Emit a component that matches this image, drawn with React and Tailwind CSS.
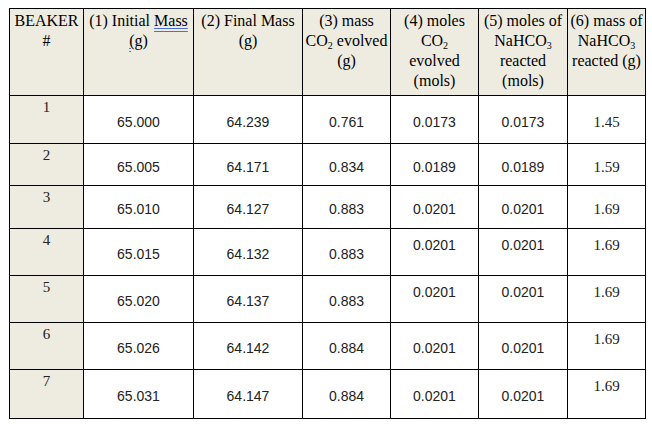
import React from "react";

const serif = { fontFamily: '"Liberation Serif", "Times New Roman", serif' };

const rows = [
  { n: "1", h: 48, v: ["65.000", "64.239", "0.761", "0.0173", "0.0173", "1.45"], top: [0, 0, 0, 0, 0, 0] },
  { n: "2", h: 42, v: ["65.005", "64.171", "0.834", "0.0189", "0.0189", "1.59"], top: [0, 0, 0, 0, 0, 0] },
  { n: "3", h: 43, v: ["65.010", "64.127", "0.883", "0.0201", "0.0201", "1.69"], top: [0, 0, 0, 0, 0, 0] },
  { n: "4", h: 47, v: ["65.015", "64.132", "0.883", "0.0201", "0.0201", "1.69"], top: [0, 0, 0, 1, 1, 1] },
  { n: "5", h: 47, v: ["65.020", "64.137", "0.883", "0.0201", "0.0201", "1.69"], top: [0, 0, 0, 1, 1, 1] },
  { n: "6", h: 47, v: ["65.026", "64.142", "0.884", "0.0201", "0.0201", "1.69"], top: [0, 0, 0, 0, 0, 1] },
  { n: "7", h: 49, v: ["65.031", "64.147", "0.884", "0.0201", "0.0201", "1.69"], top: [0, 0, 0, 0, 0, 1] },
];

const widths = [74, 110, 109, 88, 88, 89, 78];

function Sub({ children }) {
  return <span className="text-[10px] leading-none relative top-[3px]">{children}</span>;
}

export default function App() {
  const th = "border border-black bg-[#EEECE1] align-top text-center font-normal text-[16px] leading-[20px] text-black pt-[2px] px-[2px]";
  return (
    <div className="w-[652px] h-[426px] bg-white pt-[8px] pl-[9px]">
      <table className="table-fixed border-collapse w-[637px]" style={serif}>
        <colgroup>
          {widths.map((w, i) => (
            <col key={i} style={{ width: w }} />
          ))}
        </colgroup>
        <thead>
          <tr className="h-[87px]">
            <th className={th}>
              BEAKER<br />#
            </th>
            <th className={th}>
              (1) Initial{" "}
              <span className="underline decoration-double decoration-[#4a6fd8] underline-offset-[2px]">Mass</span>
              <br />
              <span className="underline decoration-double decoration-[#4a6fd8] underline-offset-[2px]">(</span>g)
            </th>
            <th className={th}>
              (2) Final Mass<br />(g)
            </th>
            <th className={th}>
              (3) mass<br />
              CO<Sub>2</Sub> evolved<br />(g)
            </th>
            <th className={th}>
              (4) moles<br />
              CO<Sub>2</Sub>
              <br />evolved<br />(mols)
            </th>
            <th className={th}>
              (5) moles of<br />
              NaHCO<Sub>3</Sub>
              <br />reacted<br />(mols)
            </th>
            <th className={th}>
              (6) mass of<br />
              NaHCO<Sub>3</Sub>
              <br />reacted (g)
            </th>
          </tr>
        </thead>
        <tbody>
          {rows.map((r) => (
            <tr key={r.n} style={{ height: r.h }}>
              <td className="border border-black bg-[#EEECE1] align-top text-center text-[15px] leading-[20px] pt-[1px] text-[#222]">
                {r.n}
              </td>
              {r.v.map((val, i) => {
                const last = i === 5;
                const isTop = r.top[i] === 1;
                return (
                  <td
                    key={i}
                    className={
                      "border border-black text-center leading-[20px] text-[#222] " +
                      (isTop ? "align-top pt-[6px] " : "align-middle pt-[4px] ") +
                      (last ? "text-[15px]" : "text-[14px]")
                    }
                    style={last ? serif : { fontFamily: '"Liberation Sans", Arial, sans-serif' }}
                  >
                    {val}
                  </td>
                );
              })}
            </tr>
          ))}
        </tbody>
      </table>
    </div>
  );
}
